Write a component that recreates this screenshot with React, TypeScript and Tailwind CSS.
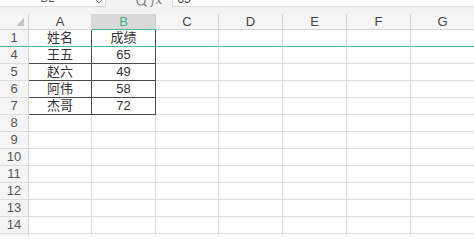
import React from "react"

const cols = ["A", "B", "C", "D", "E", "F", "G"]
const widths = [63, 64, 63, 64, 64, 64, 64]

const data: Record<number, [string, string]> = {
  1: ["姓名", "成绩"],
  4: ["王五", "65"],
  5: ["赵六", "49"],
  6: ["阿伟", "58"],
  7: ["杰哥", "72"],
}

const rows = [1, 4, 5, 6, 7, 8, 9, 10, 11, 12, 13, 14, 15]

function cellClass(row: number, col: number) {
  const inTable = row in data && col < 2
  const classes = ["h-[17px] flex items-center justify-center text-[13px] text-[#333] border-r border-b"]
  if (row === 1) {
    classes.push("border-b-[#4db594]")
  } else if (inTable) {
    classes.push("border-b-[#4a4a4a]")
  } else {
    classes.push("border-b-[#dddddd]")
  }
  if (inTable) {
    classes.push("border-r-[#4a4a4a]")
  } else {
    classes.push("border-r-[#dddddd]")
  }
  return classes.join(" ")
}

export default function App() {
  return (
    <div className="w-[474px] h-[236px] overflow-hidden bg-white font-['Liberation_Sans','Noto_Sans_CJK_SC',sans-serif]">
      {/* formula bar, cut off at the top */}
      <div className="h-[8px] flex bg-[#f3f3f3] overflow-hidden">
        <div className="w-[106px] h-[7px] bg-white border-b border-r border-[#dadada] flex overflow-hidden">
          <span className="flex-1 text-center text-[12px] leading-[12px] -mt-[8px] text-[#666]">B2</span>
          <svg className="w-[8px] h-[4px] mr-[2px] text-[#888]" viewBox="0 0 8 4">
            <path d="M1 0 L4 3 L7 0" fill="none" stroke="currentColor" strokeWidth="1" />
          </svg>
        </div>
        <div className="w-[30px]" />
        <div className="flex items-start h-[8px] overflow-hidden text-[#777]">
          <svg className="w-[11px] h-[11px] -mt-[4px]" viewBox="0 0 11 11">
            <circle cx="5" cy="5" r="4" fill="none" stroke="currentColor" strokeWidth="1.2" />
            <path d="M8 8 L10.5 10.5" stroke="currentColor" strokeWidth="1.2" />
          </svg>
          <span className="ml-[4px] text-[12px] leading-[12px] -mt-[6px] italic font-['DejaVu_Serif',serif]">fx</span>
        </div>
        <div className="w-[10px]" />
        <div className="w-px h-[8px] bg-[#dadada]" />
        <div className="flex-1 h-[7px] bg-white border-b border-[#dadada] overflow-hidden pl-[4px]">
          <span className="block text-[12px] leading-[12px] -mt-[7px] text-[#444]">65</span>
        </div>
      </div>
      <div className="h-[6px] bg-[#f3f3f3]" />

      {/* sheet */}
      <div className="grid grid-cols-[29px_63px_64px_63px_64px_64px_64px_64px]">
        {/* header row */}
        <div className="h-[16px] bg-[#f5f5f5] border-r border-b border-[#d6d6d6] flex items-end justify-end pr-[4px] pb-[3px]">
          <svg className="w-[8px] h-[8px]" viewBox="0 0 8 8">
            <path d="M8 0 L8 8 L0 8 Z" fill="#c4c4c4" />
          </svg>
        </div>
        {cols.map((c, i) => (
          <div
            key={c}
            className={
              i === 1
                ? "h-[16px] bg-[#d9d9d9] border-r border-b border-r-[#cfcfcf] border-b-[#4db594] flex items-center justify-center text-[13px] text-[#3fae8a]"
                : "h-[16px] bg-[#f5f5f5] border-r border-b border-[#d6d6d6] flex items-center justify-center text-[13px] text-[#444]"
            }
            style={{ width: widths[i] }}
          >
            {c}
          </div>
        ))}

        {rows.map((r) => (
          <React.Fragment key={r}>
            <div
              className={
                r === 1
                  ? "h-[17px] bg-[#f5f5f5] border-r border-b border-r-[#d6d6d6] border-b-[#4db594] flex items-center justify-center text-[13px] text-[#555]"
                  : "h-[17px] bg-[#f5f5f5] border-r border-b border-r-[#d6d6d6] border-b-[#dddddd] flex items-center justify-center text-[13px] text-[#555]"
              }
            >
              {r}
            </div>
            {cols.map((c, i) => (
              <div key={c} className={cellClass(r, i)}>
                {data[r] && i < 2 ? data[r][i] : ""}
              </div>
            ))}
          </React.Fragment>
        ))}
      </div>
    </div>
  )
}
